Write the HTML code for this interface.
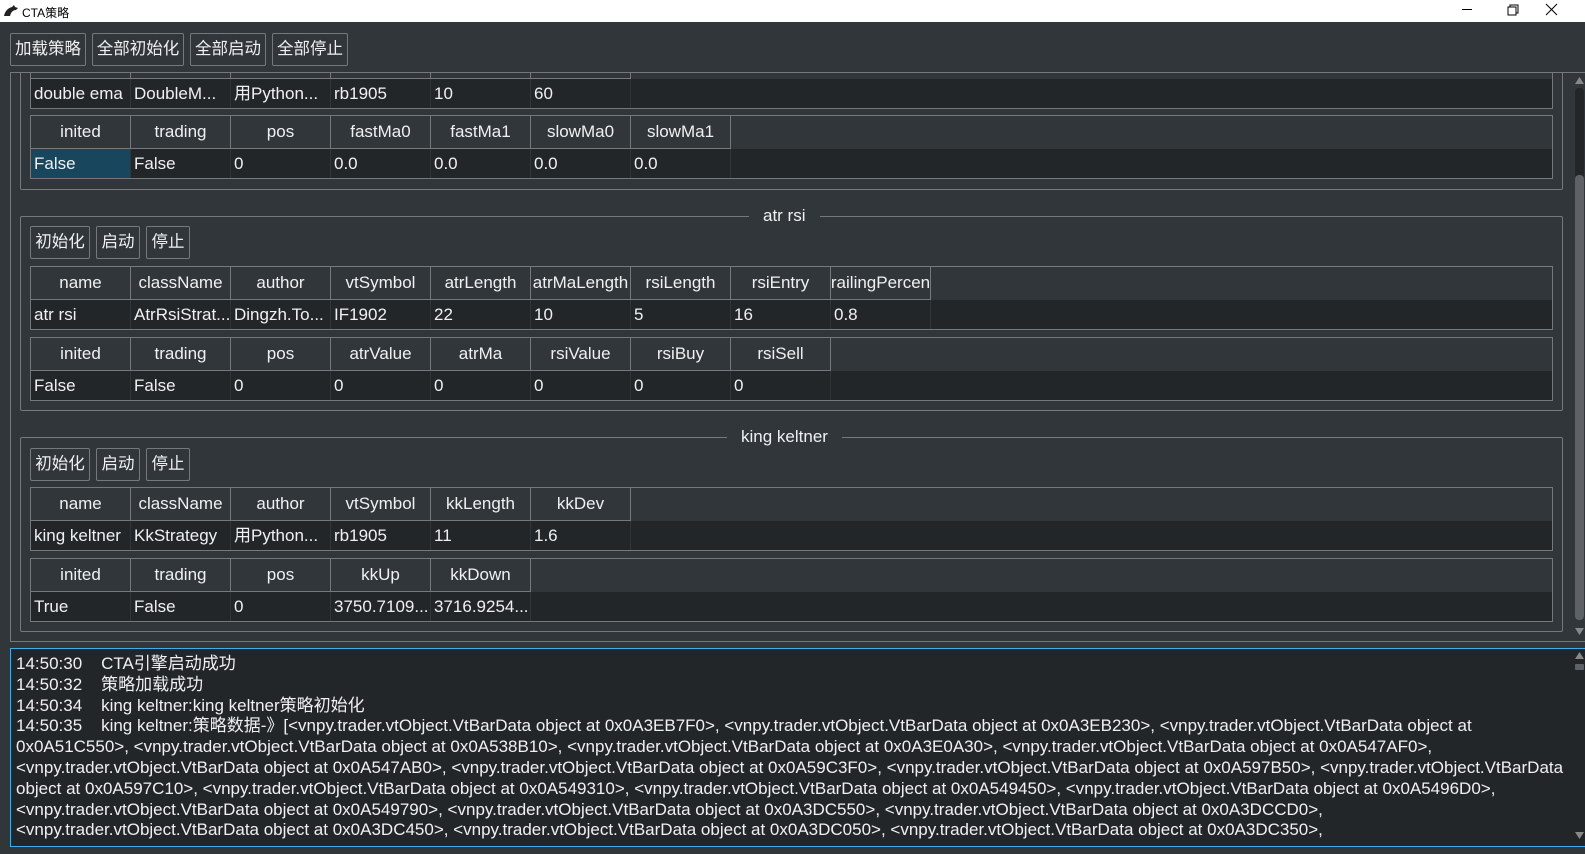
<!DOCTYPE html>
<html><head><meta charset="utf-8"><style>
*{box-sizing:border-box;margin:0;padding:0}
body{width:1585px;height:854px;overflow:hidden;background:#31363b;font-family:"Liberation Sans","Noto Sans CJK SC",sans-serif;font-size:17px;color:#eff0f1;position:relative}
.abs{position:absolute}
.title{left:0;top:0;width:1585px;height:22px;background:#fff;color:#000;font-size:12px}
.btn{position:absolute;border:1px solid #76797c;border-radius:2px;height:33px;line-height:31px;text-align:center;font-size:16.5px;color:#eff0f1;background:#31363b}
.frame{border:1px solid #76797c}
.grp{position:absolute;left:20px;width:1543px;border:1px solid #76797c;border-radius:2px}
.gt{position:absolute;background:#31363b;padding:0 14px;font-size:17px;top:-12px;line-height:22px}
.tbl{position:absolute;left:30px;width:1523px;height:64px;border:1px solid #76797c;background:#31363b;overflow:hidden}
.row{position:absolute;left:0;right:0;display:flex}
.hr{top:0;height:33px}
.dr{top:33px;height:30px;background:#232629}
.hc{width:100px;flex:none;border-right:1px solid #76797c;border-bottom:1px solid #76797c;display:flex;justify-content:center;align-items:center;white-space:nowrap;overflow:hidden;line-height:20px}
.dc{width:100px;flex:none;border-right:1px solid #31363b;display:flex;align-items:center;padding-left:3px;white-space:nowrap;overflow:hidden;line-height:20px}
.sel{background:#18465d}
.log{position:absolute;left:10px;top:648px;width:1575px;height:199px;background:#232629;border-top:1px solid #3daee9;border-bottom:1px solid #3daee9;border-left:1px solid #3daee9;overflow:hidden}
.log div{white-space:nowrap;line-height:20.8px;height:20.8px;padding-left:5px;font-size:17px}
.sb{position:absolute;width:9px;background:#232629;border-radius:4px}
.th{position:absolute;width:9px;background:#5e6166;border-radius:4px}
.clip{position:absolute;left:0;top:0;width:1585px;height:854px;clip-path:inset(73px 0 0 0)}
</style></head><body>
<div class="abs title">
<svg style="position:absolute;left:3px;top:4px" width="16" height="13" viewBox="0 0 16 13"><path d="M1 12 C2 7 5 4 9 3 L11 1 L12 3 L15 4 L13 6 C10 6 8 8 7 12 Z" fill="#222"/></svg>
<span style="position:absolute;left:22px;top:4px;font-family:'Liberation Sans','Noto Sans CJK SC',sans-serif">CTA策略</span>
<svg style="position:absolute;left:1460px;top:0" width="125" height="22"><path d="M2 9.5h10" stroke="#000"/><path d="M48 7h8v8h-8z M50 7V5h8v8h-2" stroke="#000" fill="none"/><path d="M86 4l11 11M97 4L86 15" stroke="#000"/></svg>
</div>
<div class="btn" style="left:10px;top:33px;width:76px">加载策略</div>
<div class="btn" style="left:92px;top:33px;width:92px">全部初始化</div>
<div class="btn" style="left:190px;top:33px;width:76px">全部启动</div>
<div class="btn" style="left:272px;top:33px;width:76px">全部停止</div>

<div class="abs frame" style="left:10px;top:72px;width:1575px;height:570px;border-right:none"></div>

<div class="clip">
<div class="grp" style="top:40px;height:150px"></div>
<div class="tbl" style="top:45px;height:64px">
<div class="row hr"><div class="hc"></div><div class="hc"></div><div class="hc"></div><div class="hc"></div><div class="hc"></div><div class="hc"></div></div>
<div class="row dr"><div class="dc">double ema</div><div class="dc">DoubleM...</div><div class="dc">用Python...</div><div class="dc">rb1905</div><div class="dc">10</div><div class="dc">60</div></div>
</div>
</div>
<div class="tbl" style="top:115px">
<div class="row hr"><div class="hc">inited</div><div class="hc">trading</div><div class="hc">pos</div><div class="hc">fastMa0</div><div class="hc">fastMa1</div><div class="hc">slowMa0</div><div class="hc">slowMa1</div></div>
<div class="row dr"><div class="dc sel">False</div><div class="dc">False</div><div class="dc">0</div><div class="dc">0.0</div><div class="dc">0.0</div><div class="dc">0.0</div><div class="dc">0.0</div></div>
</div>

<div class="grp" style="top:216px;height:195px"><div class="gt" style="left:728px">atr rsi</div></div>
<div class="btn" style="left:30px;top:226px;width:60px">初始化</div>
<div class="btn" style="left:96px;top:226px;width:44px">启动</div>
<div class="btn" style="left:146px;top:226px;width:44px">停止</div>
<div class="tbl" style="top:266px">
<div class="row hr"><div class="hc">name</div><div class="hc">className</div><div class="hc">author</div><div class="hc">vtSymbol</div><div class="hc">atrLength</div><div class="hc">atrMaLength</div><div class="hc">rsiLength</div><div class="hc">rsiEntry</div><div class="hc">trailingPercent</div></div>
<div class="row dr"><div class="dc">atr rsi</div><div class="dc">AtrRsiStrat...</div><div class="dc">Dingzh.To...</div><div class="dc">IF1902</div><div class="dc">22</div><div class="dc">10</div><div class="dc">5</div><div class="dc">16</div><div class="dc">0.8</div></div>
</div>
<div class="tbl" style="top:337px">
<div class="row hr"><div class="hc">inited</div><div class="hc">trading</div><div class="hc">pos</div><div class="hc">atrValue</div><div class="hc">atrMa</div><div class="hc">rsiValue</div><div class="hc">rsiBuy</div><div class="hc">rsiSell</div></div>
<div class="row dr"><div class="dc">False</div><div class="dc">False</div><div class="dc">0</div><div class="dc">0</div><div class="dc">0</div><div class="dc">0</div><div class="dc">0</div><div class="dc">0</div></div>
</div>

<div class="grp" style="top:437px;height:195px"><div class="gt" style="left:706px">king keltner</div></div>
<div class="btn" style="left:30px;top:448px;width:60px">初始化</div>
<div class="btn" style="left:96px;top:448px;width:44px">启动</div>
<div class="btn" style="left:146px;top:448px;width:44px">停止</div>
<div class="tbl" style="top:487px">
<div class="row hr"><div class="hc">name</div><div class="hc">className</div><div class="hc">author</div><div class="hc">vtSymbol</div><div class="hc">kkLength</div><div class="hc">kkDev</div></div>
<div class="row dr"><div class="dc">king keltner</div><div class="dc">KkStrategy</div><div class="dc">用Python...</div><div class="dc">rb1905</div><div class="dc">11</div><div class="dc">1.6</div></div>
</div>
<div class="tbl" style="top:558px">
<div class="row hr"><div class="hc">inited</div><div class="hc">trading</div><div class="hc">pos</div><div class="hc">kkUp</div><div class="hc">kkDown</div></div>
<div class="row dr"><div class="dc">True</div><div class="dc">False</div><div class="dc">0</div><div class="dc">3750.7109...</div><div class="dc">3716.9254...</div></div>
</div>

<div class="sb" style="left:1575px;top:88px;height:532px"></div>
<div class="th" style="left:1575px;top:175px;height:445px"></div>
<svg class="abs" style="left:1574px;top:75px" width="11" height="570"><path d="M1 9L5.5 2L10 9Z" fill="#888"/><path d="M1 553L5.5 560L10 553Z" fill="#888"/></svg>

<div class="log">
<div style="margin-top:5px">14:50:30&nbsp;&nbsp;&nbsp; CTA引擎启动成功</div>
<div>14:50:32&nbsp;&nbsp;&nbsp; 策略加载成功</div>
<div>14:50:34&nbsp;&nbsp;&nbsp; king keltner:king keltner策略初始化</div>
<div>14:50:35&nbsp;&nbsp;&nbsp; king keltner:策略数据-》[&lt;vnpy.trader.vtObject.VtBarData object at 0x0A3EB7F0&gt;, &lt;vnpy.trader.vtObject.VtBarData object at 0x0A3EB230&gt;, &lt;vnpy.trader.vtObject.VtBarData object at</div>
<div>0x0A51C550&gt;, &lt;vnpy.trader.vtObject.VtBarData object at 0x0A538B10&gt;, &lt;vnpy.trader.vtObject.VtBarData object at 0x0A3E0A30&gt;, &lt;vnpy.trader.vtObject.VtBarData object at 0x0A547AF0&gt;,</div>
<div>&lt;vnpy.trader.vtObject.VtBarData object at 0x0A547AB0&gt;, &lt;vnpy.trader.vtObject.VtBarData object at 0x0A59C3F0&gt;, &lt;vnpy.trader.vtObject.VtBarData object at 0x0A597B50&gt;, &lt;vnpy.trader.vtObject.VtBarData</div>
<div>object at 0x0A597C10&gt;, &lt;vnpy.trader.vtObject.VtBarData object at 0x0A549310&gt;, &lt;vnpy.trader.vtObject.VtBarData object at 0x0A549450&gt;, &lt;vnpy.trader.vtObject.VtBarData object at 0x0A5496D0&gt;,</div>
<div>&lt;vnpy.trader.vtObject.VtBarData object at 0x0A549790&gt;, &lt;vnpy.trader.vtObject.VtBarData object at 0x0A3DC550&gt;, &lt;vnpy.trader.vtObject.VtBarData object at 0x0A3DCCD0&gt;,</div>
<div>&lt;vnpy.trader.vtObject.VtBarData object at 0x0A3DC450&gt;, &lt;vnpy.trader.vtObject.VtBarData object at 0x0A3DC050&gt;, &lt;vnpy.trader.vtObject.VtBarData object at 0x0A3DC350&gt;,</div>
</div>
<div class="sb" style="left:1575px;top:662px;height:170px"></div>
<div class="th" style="left:1575px;top:664px;height:6px;border-radius:1px"></div>
<svg class="abs" style="left:1574px;top:650px" width="11" height="197"><path d="M1 9L5.5 2L10 9Z" fill="#888"/><path d="M1 182L5.5 189L10 182Z" fill="#888"/></svg>
</body></html>
